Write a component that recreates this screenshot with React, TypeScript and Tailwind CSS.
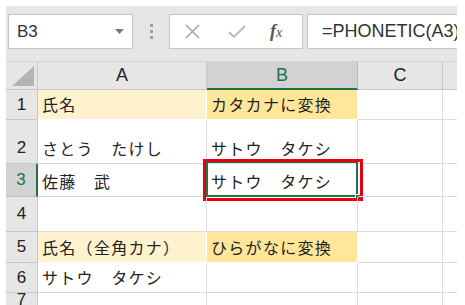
import React from "react"

const jp = { fontFamily: '"Noto Sans CJK JP", "Noto Sans", sans-serif' }
const latin = { fontFamily: '"Liberation Sans", Arial, sans-serif' }

const rowHeights = [30, 44, 33, 35, 31, 30, 14]

const cells: Record<string, { text?: string; fill?: string }> = {
  A1: { text: "氏名", fill: "bg-[#fff2cc]" },
  B1: { text: "カタカナに変換", fill: "bg-[#ffe699]" },
  A2: { text: "さとう　たけし" },
  B2: { text: "サトウ　タケシ" },
  A3: { text: "佐藤　武" },
  B3: { text: "サトウ　タケシ" },
  A5: { text: "氏名（全角カナ）", fill: "bg-[#fff2cc]" },
  B5: { text: "ひらがなに変換", fill: "bg-[#ffe699]" },
  A6: { text: "サトウ　タケシ" },
}

function Cell({ id, height }: { id: string; height: number }) {
  const c = cells[id]
  const selected = id === "B3"
  return (
    <div
      className={`relative flex items-end pl-[4px] pb-[5px] text-[16px] leading-[20px] tracking-[1.3px] text-[#222] border-r border-b ${
        c?.fill ? `${c.fill} border-white` : "border-[#dadada]"
      }`}
      style={{ ...jp, height }}
    >
      {c?.text && <span className="whitespace-nowrap">{c.text}</span>}
      {selected && (
        <>
          <div className="absolute -top-[3px] -left-[1px] right-[-1px] bottom-[-1px] border-2 border-[#217346]" />
          <div className="absolute right-[-4px] bottom-[-4px] w-[6px] h-[6px] bg-[#217346] border border-white" />
          <div className="absolute -top-[5px] -left-[4px] right-[-6px] bottom-[-5px] border-[3px] border-[#e60012]" />
        </>
      )}
    </div>
  )
}

export default function App() {
  return (
    <div className="w-[465px] h-[305px] bg-white pl-[6px] pt-[6px] overflow-hidden">
      <div className="w-[451px]">
        {/* name box + formula bar */}
        <div className="h-[55px] bg-[#e6e6e6] flex items-start pt-[8px] pl-[2px]">
          <div className="w-[125px] h-[35px] bg-white border border-[#c6c6c6] flex items-center justify-between pl-[8px] pr-[8px]">
            <span className="text-[17px] text-[#333]" style={latin}>B3</span>
            <svg width="9" height="5" viewBox="0 0 9 5">
              <path d="M0 0 L9 0 L4.5 5 Z" fill="#777" />
            </svg>
          </div>
          <div className="w-[36px] h-[35px] flex flex-col items-center justify-center gap-[3px]">
            <div className="w-[3px] h-[3px] bg-[#a0a0a0]" />
            <div className="w-[3px] h-[3px] bg-[#a0a0a0]" />
            <div className="w-[3px] h-[3px] bg-[#a0a0a0]" />
          </div>
          <div className="w-[134px] h-[35px] bg-white border border-[#c6c6c6] flex items-center">
            <svg className="ml-[15px]" width="15" height="15" viewBox="0 0 15 15">
              <path d="M1 1 L14 14 M14 1 L1 14" stroke="#a8a8a8" strokeWidth="1.6" />
            </svg>
            <svg className="ml-[28px]" width="18" height="14" viewBox="0 0 18 14">
              <path d="M1 7 L6 12 L17 1" stroke="#b8b8b8" strokeWidth="1.8" fill="none" />
            </svg>
            <span
              className="ml-[24px] text-[18px] italic font-bold text-[#555]"
              style={{ fontFamily: '"Liberation Serif", "Times New Roman", serif' }}
            >
              f<span className="text-[14px] font-normal">x</span>
            </span>
          </div>
          <div className="flex-1 ml-[4px] h-[35px] bg-white border-y border-l border-[#c6c6c6] flex items-center pl-[14px] overflow-hidden">
            <span className="text-[18px] text-[#333] whitespace-nowrap" style={latin}>=PHONETIC(A3)</span>
          </div>
        </div>

        {/* sheet grid */}
        <div className="grid grid-cols-[32px_169px_151px_85px_14px] border-t border-[#d4d4d4]" style={latin}>
          <div className="h-[28px] bg-[#e6e6e6] border-r border-b border-[#c8c8c8] relative overflow-hidden">
            <svg className="absolute right-[3px] bottom-[3px]" width="22" height="20" viewBox="0 0 22 20">
              <path d="M22 0 L22 20 L0 20 Z" fill="#b4b4b4" />
            </svg>
          </div>
          <div className="h-[28px] bg-[#e6e6e6] border-r border-b border-[#c8c8c8] flex items-center justify-center text-[18px] text-[#222]">A</div>
          <div className="h-[28px] bg-[#d2d2d2] border-r border-[#bdbdbd] border-b-2 border-b-[#217346] flex items-center justify-center text-[18px] text-[#217346]">B</div>
          <div className="h-[28px] bg-[#e6e6e6] border-r border-b border-[#c8c8c8] flex items-center justify-center text-[18px] text-[#222]">C</div>
          <div className="h-[28px] bg-[#e6e6e6] border-b border-[#c8c8c8]" />

          {rowHeights.map((h, i) => {
            const r = i + 1
            const sel = r === 3
            return (
              <React.Fragment key={r}>
                <div
                  className={`flex justify-center text-[17px] border-b ${
                    sel
                      ? "bg-[#d2d2d2] text-[#217346] border-r-2 border-r-[#217346] border-b-[#bdbdbd]"
                      : "bg-[#e6e6e6] text-[#222] border-r border-[#c8c8c8]"
                  } ${r === 2 ? "items-end pb-[3px]" : "items-center"}`}
                  style={{ height: h }}
                >
                  {r}
                </div>
                <Cell id={`A${r}`} height={h} />
                <Cell id={`B${r}`} height={h} />
                <Cell id={`C${r}`} height={h} />
                <div className="border-b border-[#dadada]" style={{ height: h }} />
              </React.Fragment>
            )
          })}
        </div>
      </div>
    </div>
  )
}
